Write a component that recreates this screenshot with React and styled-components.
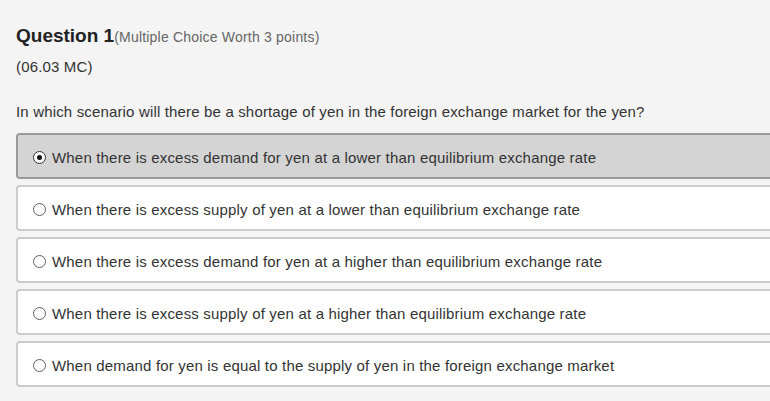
import React from "react";
import styled, { createGlobalStyle } from "styled-components";

const Global = createGlobalStyle`
  html, body {
    margin: 0;
    padding: 0;
    background: #f4f4f4;
    overflow: hidden;
  }
  body {
    font-family: "Liberation Sans", Arial, sans-serif;
    color: #333;
  }
`;

const Page = styled.div`
  padding: 24px 0 0 16px;
`;

const TitleRow = styled.div`
  line-height: 24px;
  white-space: nowrap;
`;

const Title = styled.span`
  font-size: 19px;
  font-weight: bold;
  color: #222;
`;

const Worth = styled.span`
  font-size: 14px;
  letter-spacing: 0.2px;
  color: #666;
`;

const Code = styled.div`
  margin-top: 8px;
  font-size: 15px;
  line-height: 20px;
  letter-spacing: 0.15px;
  color: #333;
`;

const Prompt = styled.div`
  margin-top: 25px;
  font-size: 15px;
  line-height: 20px;
  letter-spacing: 0.16px;
  color: #333;
  white-space: nowrap;
`;

const Options = styled.div`
  margin-top: 11px;
  margin-right: -12px;
  display: flex;
  flex-direction: column;
  gap: 6px;
`;

const Option = styled.label`
  box-sizing: border-box;
  height: 46px;
  display: flex;
  align-items: flex-start;
  gap: 6px;
  padding: 13px 15px 9px;
  border: 2px solid ${(p) => (p.$selected ? "#9a9a9a" : "#cccccc")};
  border-radius: 4px;
  background: ${(p) => (p.$selected ? "#d4d4d4" : "#ffffff")};
  font-size: 15px;
  line-height: 20px;
  letter-spacing: 0.18px;
  color: #333;
  white-space: nowrap;
`;

const Radio = styled.span`
  box-sizing: border-box;
  flex: none;
  width: 13px;
  height: 13px;
  margin-top: 3px;
  border-radius: 50%;
  border: 1px solid ${(p) => (p.$checked ? "#333" : "#5f5f5f")};
  background: #fff;
  display: flex;
  align-items: center;
  justify-content: center;
  &::after {
    content: "";
    display: ${(p) => (p.$checked ? "block" : "none")};
    width: 5px;
    height: 5px;
    border-radius: 50%;
    background: #111;
  }
`;

const choices = [
  "When there is excess demand for yen at a lower than equilibrium exchange rate",
  "When there is excess supply of yen at a lower than equilibrium exchange rate",
  "When there is excess demand for yen at a higher than equilibrium exchange rate",
  "When there is excess supply of yen at a higher than equilibrium exchange rate",
  "When demand for yen is equal to the supply of yen in the foreign exchange market",
];

export default function App() {
  const selected = 0;
  return (
    <>
      <Global />
      <Page>
        <TitleRow>
          <Title>Question 1</Title>
          <Worth>(Multiple Choice Worth 3 points)</Worth>
        </TitleRow>
        <Code>(06.03 MC)</Code>
        <Prompt>
          In which scenario will there be a shortage of yen in the foreign exchange market for the yen?
        </Prompt>
        <Options>
          {choices.map((c, i) => (
            <Option key={i} $selected={i === selected}>
              <Radio $checked={i === selected} />
              <span>{c}</span>
            </Option>
          ))}
        </Options>
      </Page>
    </>
  );
}
